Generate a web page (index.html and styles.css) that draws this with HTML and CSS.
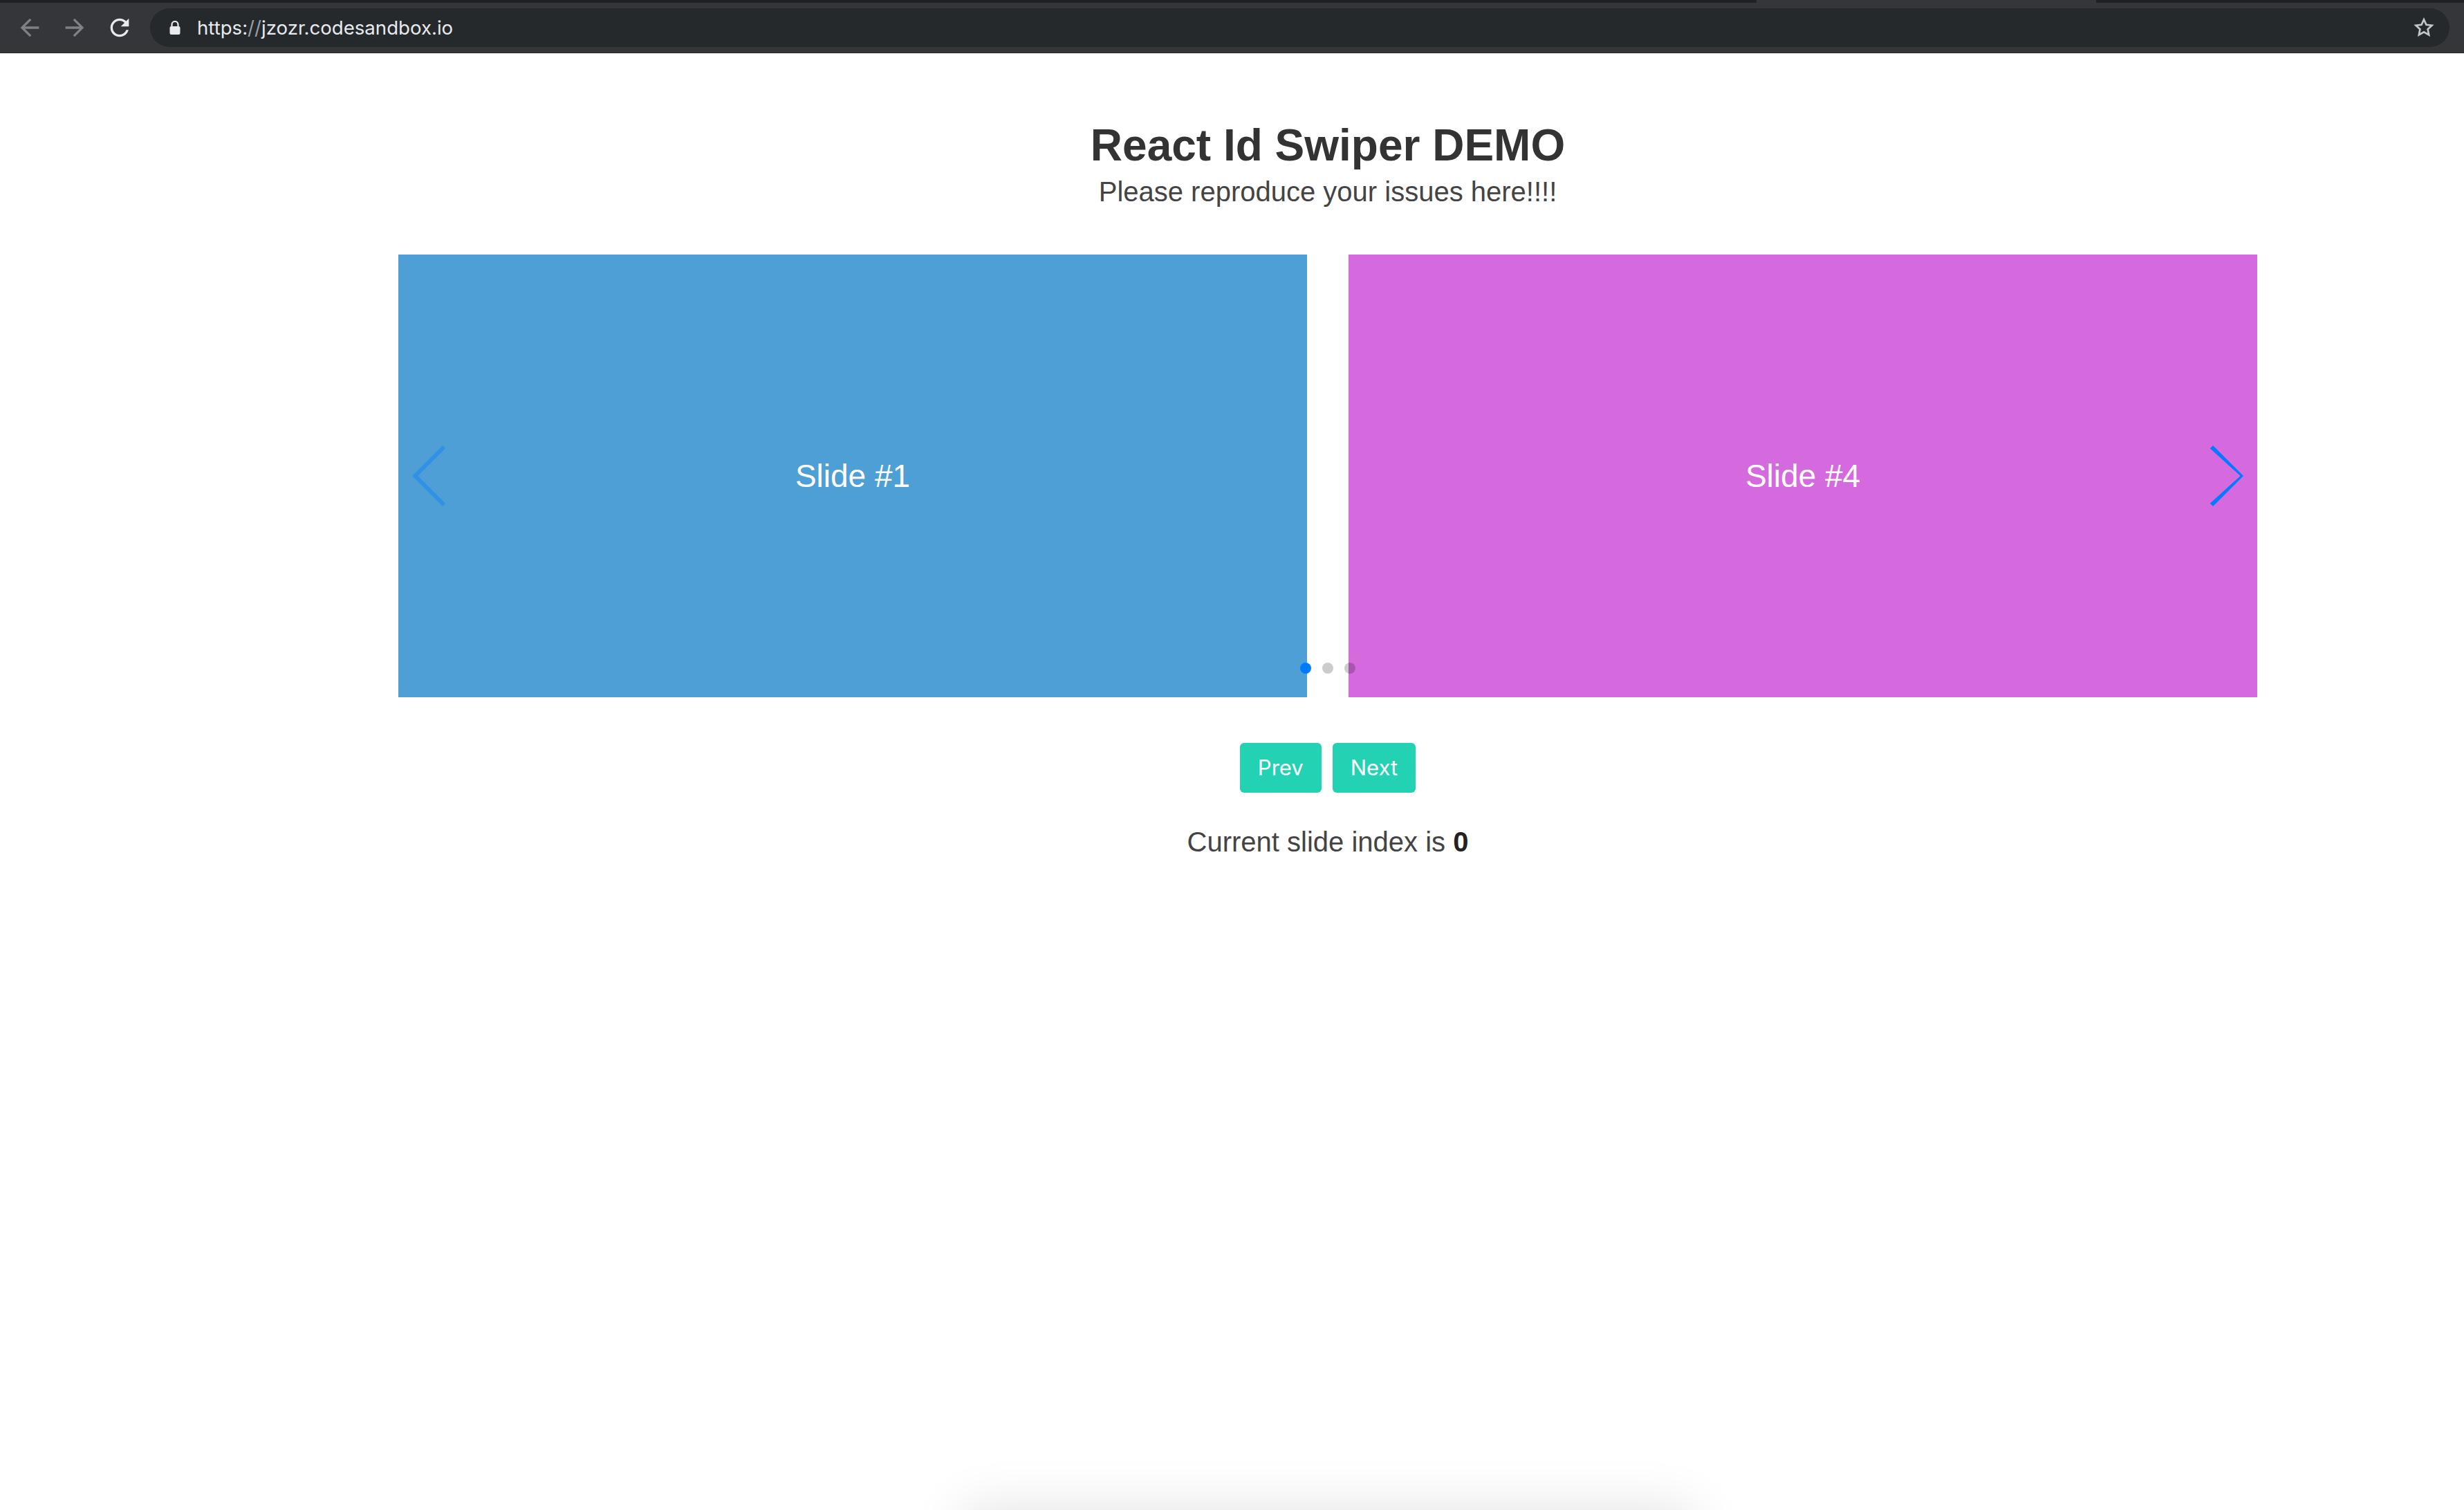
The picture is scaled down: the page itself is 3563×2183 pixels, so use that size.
FILE: index.html
```html
<!DOCTYPE html>
<html lang="en">
<head>
<meta charset="utf-8">
<title>React Id Swiper DEMO</title>
<link rel="stylesheet" href="styles.css">
</head>
<body>
<header class="chrome">
  <div class="tabstrip"><div class="tab-active"></div></div>
  <div class="toolbar">
    <svg class="nav-icon dim" viewBox="0 0 24 24"><path d="M20 11H7.83l5.59-5.59L12 4l-8 8 8 8 1.41-1.41L7.830 13H20v-2z"/></svg>
    <svg class="nav-icon dim" viewBox="0 0 24 24"><path d="M4 11h12.17l-5.59-5.59L12 4l8 8-8 8-1.41-1.41L16.17 13H4v-2z"/></svg>
    <svg class="nav-icon" viewBox="0 0 24 24"><path d="M17.65 6.35C16.2 4.9 14.21 4 12 4c-4.42 0-7.99 3.58-7.99 8s3.57 8 7.99 8c3.73 0 6.84-2.55 7.73-6h-2.08c-.82 2.33-3.04 4-5.65 4-3.31 0-6-2.69-6-6s2.69-6 6-6c1.66 0 3.14.69 4.22 1.78L13 11h7V4l-2.35 2.35z"/></svg>
    <div class="omnibox">
      <svg class="lock" viewBox="0 0 16 20"><path d="M3.5 8V5.5a4.5 4.5 0 0 1 9 0V8" fill="none" stroke="#e8eaed" stroke-width="2.2"/><rect x="0.5" y="8" width="15" height="12" rx="2.2" fill="#e8eaed"/></svg>
      <span class="url">https:<span class="url-dim">//</span>jzozr.codesandbox.io</span>
      <svg class="star" viewBox="0 0 24 24"><path d="M12 3.2l2.6 5.6 6.1.7-4.5 4.2 1.2 6.1L12 16.8l-5.4 3 1.2-6.1-4.5-4.2 6.1-.7z" fill="none" stroke="#c4c7ca" stroke-width="2" stroke-linejoin="miter"/></svg>
    </div>
  </div>
</header>

<main class="demo">
  <h1 class="title">React Id Swiper DEMO</h1>
  <p class="subtitle">Please reproduce your issues here!!!!</p>

  <div class="swiper">
    <div class="slides">
      <div class="slide slide-blue">Slide #1</div>
      <div class="slide slide-pink">Slide #4</div>
    </div>
    <div class="swiper-prev disabled">
      <svg viewBox="0 0 27 44"><path d="M0,22L22,0l2.1,2.1L4.2,22l19.9,19.9L22,44L0,22L0,22L0,22z" fill="#007aff"/></svg>
    </div>
    <div class="swiper-next">
      <svg viewBox="0 0 27 44"><path d="M27,22L27,22L5,44l-2.1-2.1L24.8,22L2.9,2.1L5,0L27,22L27,22z" fill="#007aff"/></svg>
    </div>
    <div class="pagination">
      <span class="bullet active"></span>
      <span class="bullet"></span>
      <span class="bullet"></span>
    </div>
  </div>

  <div class="controls">
    <button class="btn">Prev</button>
    <button class="btn">Next</button>
  </div>

  <p class="status">Current slide index is <strong>0</strong></p>
</main>

<div class="bottom-sheet"></div>
</body>
</html>
```

FILE: styles.css
```css
html, body {
  margin: 0;
  padding: 0;
  background: #ffffff;
  overflow: hidden;
  height: 100%;
}

body {
  font-family: "Liberation Sans", Arial, Helvetica, sans-serif;
}

/* ---------- browser chrome ---------- */
.chrome {
  height: 77px;
  background: #35363a;
  display: flex;
  flex-direction: column;
}

.tabstrip {
  height: 4px;
  background: #202124;
  display: flex;
}

.tab-active {
  margin-left: 2540px;
  width: 491px;
  background: #35363a;
}

.toolbar {
  flex: 1;
  display: flex;
  align-items: center;
  padding-left: 23px;
  padding-right: 21px;
  border-bottom: 1px solid #2a2b2e;
}

.nav-icon {
  width: 40px;
  height: 40px;
  fill: #e8eaed;
  margin-right: 25px;
  flex: none;
}

.nav-icon.dim {
  fill: #7e8185;
}

.omnibox {
  flex: 1;
  height: 56px;
  margin-left: -1px;
  border-radius: 28px;
  background: #26292c;
  display: flex;
  align-items: center;
  padding-left: 28px;
  padding-right: 21px;
}

.lock {
  width: 16px;
  height: 20px;
  flex: none;
}

.url {
  margin-left: 24px;
  font-family: "Inter", "Liberation Sans", sans-serif;
  font-size: 27.6px;
  color: #e8eaed;
}

.url-dim {
  color: #9aa0a6;
}

.star {
  margin-left: auto;
  width: 32px;
  height: 32px;
  flex: none;
}

/* ---------- demo page ---------- */
.demo {
  width: 2688px;
  margin-left: 576px;
  text-align: center;
}

.title {
  margin: 97px 0 0;
  font-size: 64px;
  line-height: 72px;
  font-weight: 700;
  color: #333333;
}

.subtitle {
  margin: 8px 0 0;
  font-size: 40px;
  line-height: 46px;
  color: #444444;
}

.swiper {
  position: relative;
  margin-top: 68px;
  height: 640px;
}

.slides {
  display: flex;
  gap: 60px;
  height: 100%;
}

.slide {
  flex: 1;
  display: flex;
  align-items: center;
  justify-content: center;
  color: #ffffff;
  font-size: 46px;
}

.slide-blue {
  background: #4f9fd7;
}

.slide-pink {
  background: #d56ade;
}

.swiper-prev,
.swiper-next {
  position: absolute;
  top: 50%;
  margin-top: -44px;
  width: 54px;
  height: 88px;
}

.swiper-prev svg,
.swiper-next svg {
  display: block;
  width: 54px;
  height: 88px;
}

.swiper-prev {
  left: 20px;
}

.swiper-prev.disabled {
  opacity: 0.35;
}

.swiper-next {
  right: 20px;
}

.pagination {
  position: absolute;
  left: 0;
  right: 0;
  bottom: 34px;
  display: flex;
  justify-content: center;
  gap: 16px;
}

.bullet {
  width: 16px;
  height: 16px;
  border-radius: 50%;
  background: rgba(0, 0, 0, 0.2);
}

.bullet.active {
  background: #007aff;
}

.controls {
  margin-top: 66px;
  display: flex;
  justify-content: center;
  gap: 16px;
}

.btn {
  height: 72px;
  padding: 0 26px;
  border: none;
  border-radius: 6px;
  background: #23d1b3;
  color: #ffffff;
  font-family: "Inter", "Liberation Sans", sans-serif;
  font-size: 31px;
  line-height: 72px;
}

.status {
  margin: 48px 0 0;
  font-size: 40px;
  line-height: 46px;
  color: #444444;
}

.status strong {
  color: #222222;
}

.bottom-sheet {
  position: fixed;
  left: 1390px;
  width: 1060px;
  top: 2183px;
  height: 200px;
  border-radius: 24px;
  box-shadow: 0 0 80px rgba(0, 0, 0, 0.12);
}
```
